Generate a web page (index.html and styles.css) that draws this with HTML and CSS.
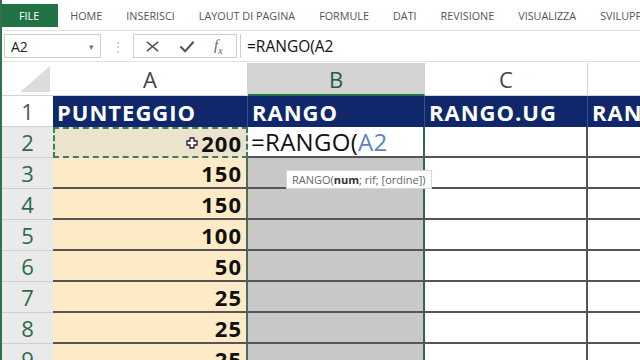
FILE: index.html
```html
<!DOCTYPE html>
<html>
  <head>
    <title>RANGO - Excel</title>
    <link rel="stylesheet" href="styles.css">
  </head>
  <body>
    <div class="app">

      <!-- ribbon tabs -->
      <div class="tabs">
        <span class="tab tab-file">FILE</span>
        <span class="tab">HOME</span>
        <span class="tab">INSERISCI</span>
        <span class="tab">LAYOUT DI PAGINA</span>
        <span class="tab">FORMULE</span>
        <span class="tab">DATI</span>
        <span class="tab">REVISIONE</span>
        <span class="tab">VISUALIZZA</span>
        <span class="tab">SVILUPPO</span>
      </div>

      <!-- formula bar -->
      <div class="formula-bar">
        <div class="name-box">
          <span>A2</span>
          <span class="arrow">&#9662;</span>
        </div>
        <span class="grip">&#8942;</span>
        <div class="fx-buttons">
          <svg width="15" height="15" viewBox="0 0 16 16"><path d="M2 3 L14 13 M14 3 L2 13" stroke="#555" stroke-width="1.6" fill="none"/></svg>
          <svg width="16" height="15" viewBox="0 0 16 16"><path d="M1 8 L6 13 L15 3" stroke="#555" stroke-width="2.2" fill="none"/></svg>
          <span class="fx">f<sub>x</sub></span>
        </div>
        <div class="formula-input">=RANGO(A2</div>
      </div>

      <!-- sheet -->
      <div class="sheet">
        <div class="corner"><span class="corner-tri"></span></div>
        <div class="col-head">A</div>
        <div class="col-head col-sel">B</div>
        <div class="col-head">C</div>
        <div class="col-head col-last"></div>

        <div class="row-head row-first">1</div>
        <div class="cell head">PUNTEGGIO</div>
        <div class="cell head">RANGO</div>
        <div class="cell head">RANGO.UG</div>
        <div class="cell head">RAN</div>

        <div class="row-head">2</div>
        <div class="cell score active">
          <svg class="cursor" width="12" height="12" viewBox="0 0 12 12"><path d="M4 1 H8 V4 H11 V8 H8 V11 H4 V8 H1 V4 H4 Z" fill="#fff" stroke="#222" stroke-width="1.3"/></svg>200
        </div>
        <div class="cell edit">=RANGO(<span class="ref">A2</span>
          <div class="tip">RANGO(<b>num</b>; rif; [ordine])</div>
        </div>
        <div class="cell blank"></div>
        <div class="cell blank"></div>

        <div class="row-head">3</div>
        <div class="cell score">150</div>
        <div class="cell sel"></div>
        <div class="cell blank"></div>
        <div class="cell blank"></div>

        <div class="row-head">4</div>
        <div class="cell score">150</div>
        <div class="cell sel"></div>
        <div class="cell blank"></div>
        <div class="cell blank"></div>

        <div class="row-head">5</div>
        <div class="cell score">100</div>
        <div class="cell sel"></div>
        <div class="cell blank"></div>
        <div class="cell blank"></div>

        <div class="row-head">6</div>
        <div class="cell score">50</div>
        <div class="cell sel"></div>
        <div class="cell blank"></div>
        <div class="cell blank"></div>

        <div class="row-head">7</div>
        <div class="cell score">25</div>
        <div class="cell sel"></div>
        <div class="cell blank"></div>
        <div class="cell blank"></div>

        <div class="row-head">8</div>
        <div class="cell score">25</div>
        <div class="cell sel"></div>
        <div class="cell blank"></div>
        <div class="cell blank"></div>

        <div class="row-head">9</div>
        <div class="cell score">25</div>
        <div class="cell sel"></div>
        <div class="cell blank"></div>
        <div class="cell blank"></div>
      </div>

    </div>
  </body>
</html>
```
FILE: styles.css
```css
body {
  margin: 0;
  background-color: #ffffff;
  font-family: "Open Sans", "Liberation Sans", sans-serif;
  overflow: hidden;
}

.app {
  width: 640px;
  height: 360px;
  overflow: hidden;
  border-left: 2px solid #2e7250;
  box-sizing: border-box;
}

/* ribbon tabs */

.tabs {
  display: flex;
  align-items: center;
  height: 30px;
  background-color: #ffffff;
}

.tab {
  font-size: 10.8px;
  color: #555;
  padding: 0 12px 0 12px;
  white-space: nowrap;
}

.tab-file {
  background-color: #217346;
  color: #fff;
  padding: 4px 19px 4px 17px;
  margin-right: 0;
}

/* formula bar */

.formula-bar {
  display: flex;
  align-items: center;
  height: 32px;
  border-top: 1px solid #e2e2e2;
  border-bottom: 1px solid #e2e2e2;
  box-sizing: border-box;
  padding-left: 2px;
}

.name-box {
  display: flex;
  justify-content: space-between;
  align-items: center;
  width: 97px;
  height: 24px;
  border: 1px solid #cfcfcf;
  box-sizing: border-box;
  padding: 0 6px 0 6px;
  font-size: 14px;
  color: #222;
}

.arrow {
  font-size: 9px;
  color: #777;
}

.grip {
  color: #bbb;
  font-size: 12px;
  margin: 0 9px 0 11px;
}

.fx-buttons {
  display: flex;
  align-items: center;
  gap: 19px;
  width: 104px;
  height: 24px;
  border: 1px solid #cfcfcf;
  box-sizing: border-box;
  padding: 0 0 0 11px;
}

.fx {
  font-family: "Liberation Serif", serif;
  font-style: italic;
  font-size: 15px;
  color: #666;
}

.fx sub {
  font-size: 10px;
}

.formula-input {
  flex: 1;
  height: 24px;
  margin-left: 3px;
  border-left: 1px solid #cfcfcf;
  padding-left: 6px;
  font-size: 15.5px;
  line-height: 24px;
  color: #111;
}

/* sheet grid */

.sheet {
  display: grid;
  grid-template-columns: 51px 195px 177px 163px 1fr;
  grid-template-rows: 33px repeat(9, 31px);
  margin-top: 1px;
}

.corner {
  position: relative;
  background-color: #fff;
  border-bottom: 1px solid #d4d4d4;
}

.corner-tri {
  position: absolute;
  right: 3px;
  bottom: 3px;
  width: 0;
  height: 0;
  border-left: 30px solid transparent;
  border-bottom: 26px solid #dcdcdc;
}

.col-head {
  display: flex;
  align-items: center;
  justify-content: center;
  font-size: 22px;
  color: #444;
  background-color: #fff;
  border-right: 1px solid #d4d4d4;
  border-bottom: 1px solid #d4d4d4;
}

.col-sel {
  background-color: #d4d4d4;
  color: #2b5b43;
  border-bottom: 2px solid #217346;
}

.col-last {
  border-right: none;
}

.row-head {
  display: flex;
  align-items: center;
  justify-content: center;
  font-size: 22px;
  color: #2f6a4d;
  background-color: #eaeaea;
  border-bottom: 1px solid #cfcfcf;
}

.row-first {
  background-color: #fff;
  color: #555;
}

.cell {
  display: flex;
  align-items: center;
  font-size: 22px;
  letter-spacing: 1px;
  border-bottom: 2px solid #555;
  border-right: 1px solid #888;
  box-sizing: border-box;
  white-space: nowrap;
  overflow: visible;
}

.head {
  background-color: #10276b;
  color: #fff;
  font-weight: bold;
  padding-left: 4px;
  border-bottom: none;
  border-right: 1px solid #3a4f86;
}

.score {
  background-color: #fdebc7;
  color: #111;
  font-weight: bold;
  justify-content: flex-end;
  padding-right: 4px;
  border-right: 2px solid #4d6f58;
}

.active {
  position: relative;
  background-color: #ece3cd;
  border: 2px dashed #3f7d60;
  border-right: 2px dashed #3f7d60;
}

.cursor {
  margin-right: 3px;
}

.edit {
  position: relative;
  background-color: #fff;
  padding-left: 3px;
  font-size: 24px;
  letter-spacing: 0.3px;
  color: #111;
  border-right: 2px solid #2d6a4c;
}

.ref {
  color: #5b84c8;
}

.tip {
  position: absolute;
  left: 38px;
  top: 43px;
  background-color: #fff;
  border: 1px solid #d8d8d8;
  font-size: 11px;
  letter-spacing: 0;
  color: #666;
  padding: 1px 5px;
  z-index: 2;
}

.tip b {
  color: #333;
}

.sel {
  background-color: #c8c8c8;
  border-right: 2px solid #2d6a4c;
}

.blank {
  background-color: #fff;
  border-right: 2px solid #555;
}
```
